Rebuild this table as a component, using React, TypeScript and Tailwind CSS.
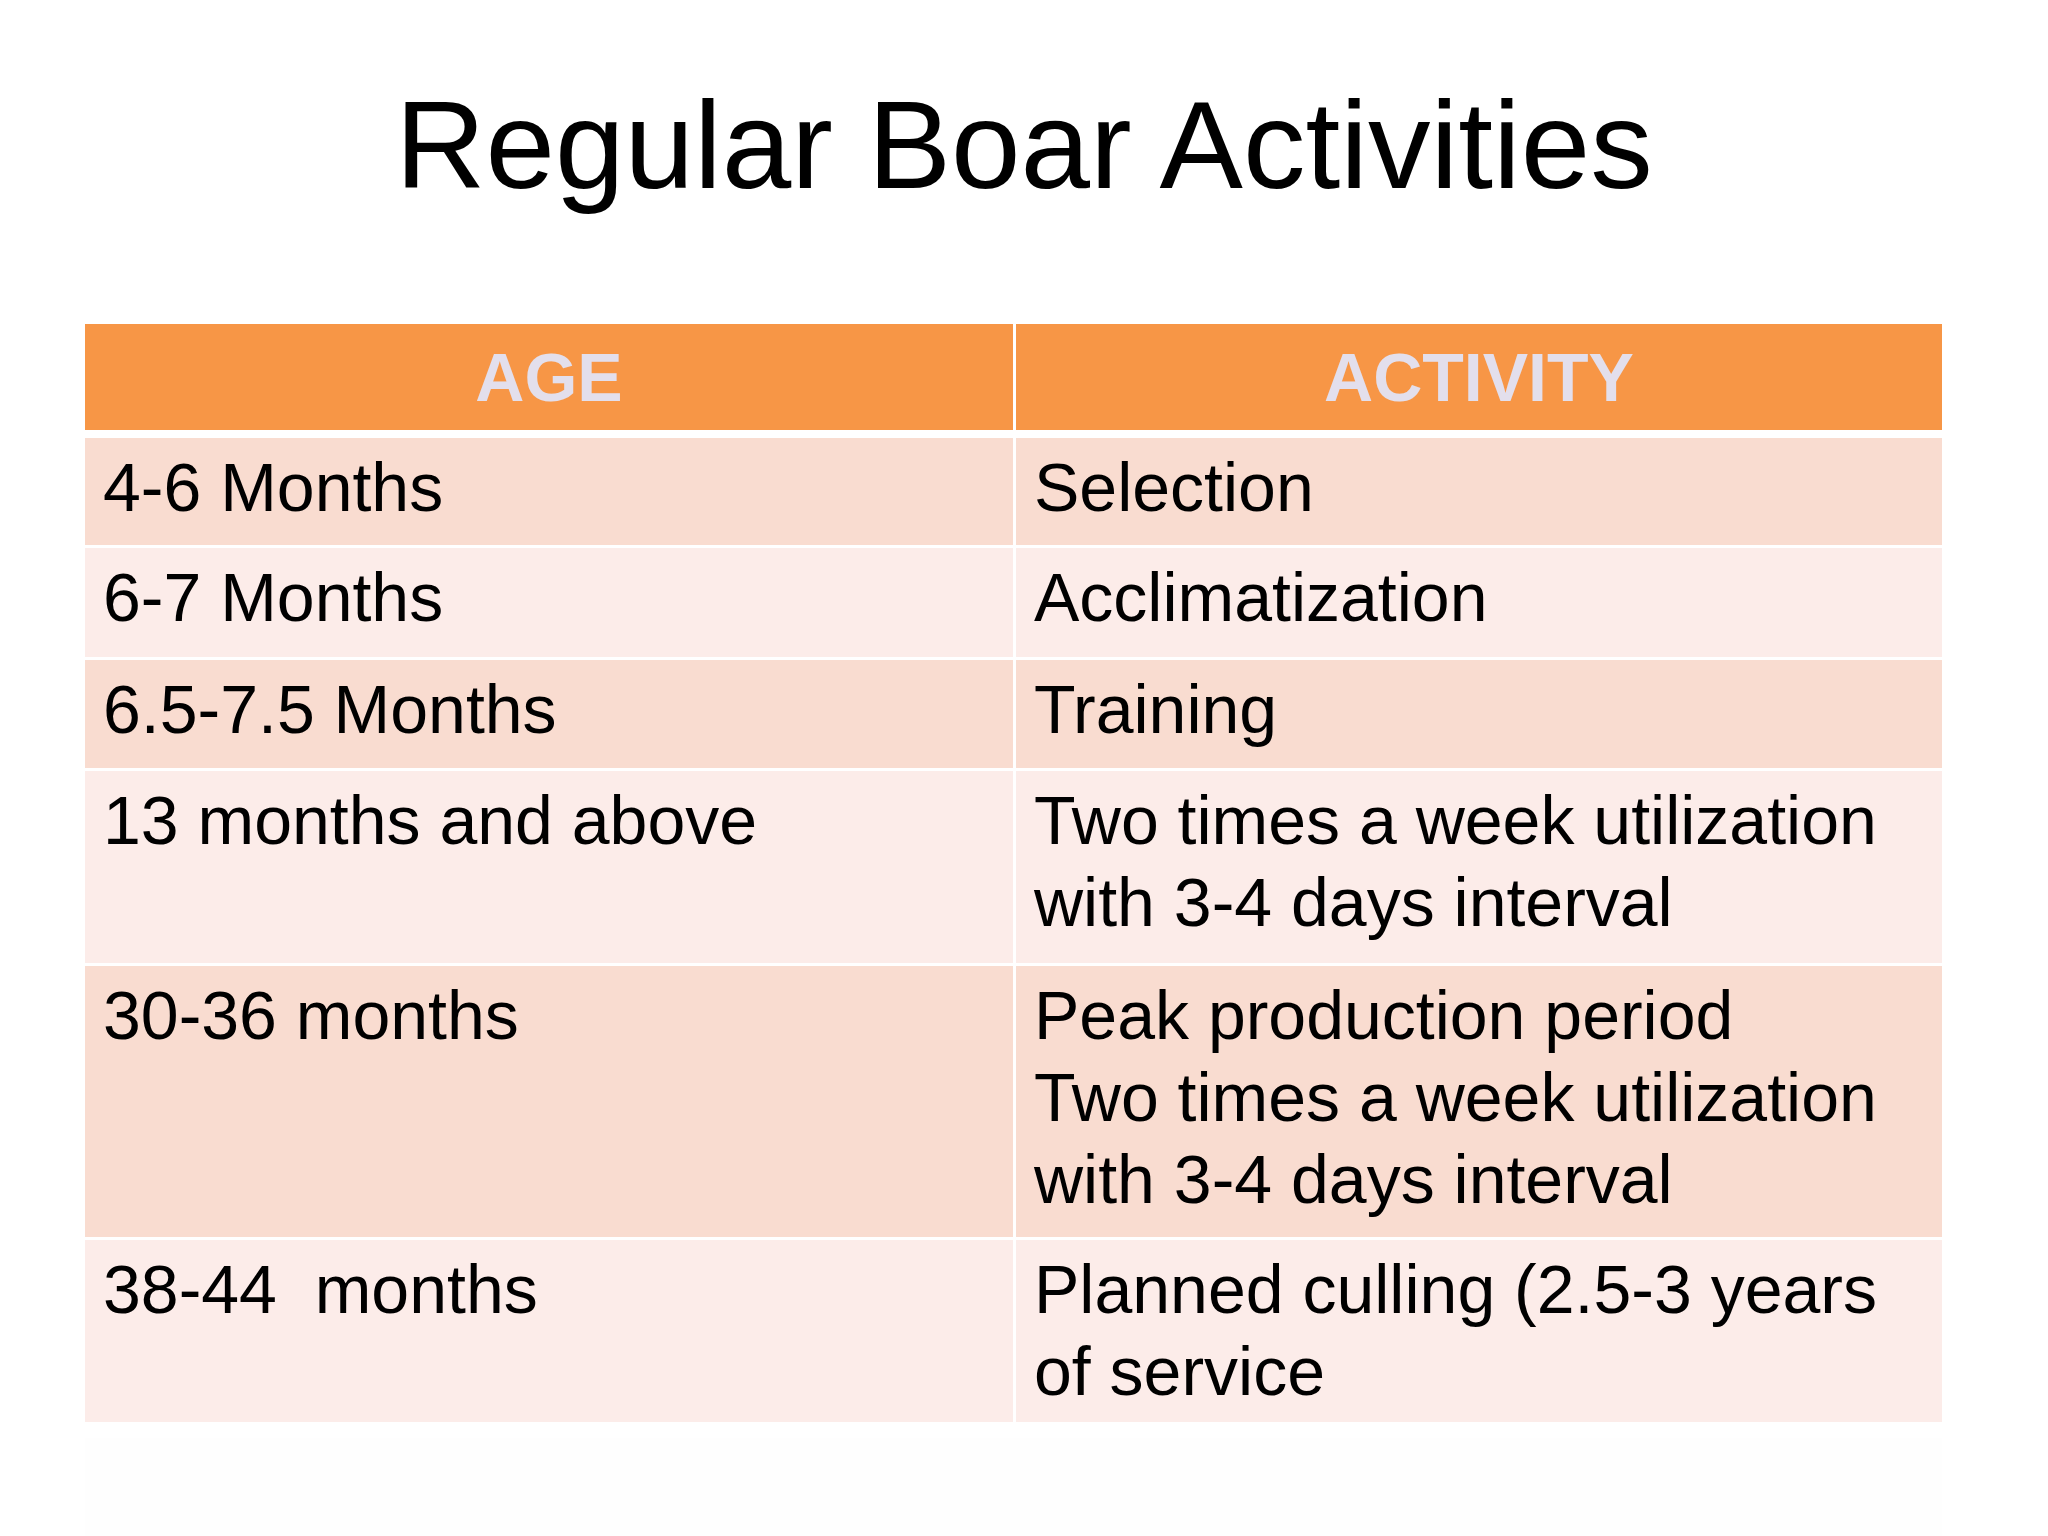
const rows = [
  { age: "4-6 Months", activity: ["Selection"], h: "h-[107px]", bg: "bg-[#f9dcd0]" },
  { age: "6-7 Months", activity: ["Acclimatization"], h: "h-[109px]", bg: "bg-[#fcece9]" },
  { age: "6.5-7.5 Months", activity: ["Training"], h: "h-[108px]", bg: "bg-[#f9dcd0]" },
  {
    age: "13 months and above",
    activity: ["Two times a week utilization", "with 3-4 days interval"],
    h: "h-[192px]",
    bg: "bg-[#fcece9]",
  },
  {
    age: "30-36 months",
    activity: [
      "Peak production period",
      "Two times a week utilization",
      "with 3-4 days interval",
    ],
    h: "h-[271px]",
    bg: "bg-[#f9dcd0]",
  },
  {
    age: "38-44\u00a0 months",
    activity: ["Planned culling (2.5-3 years", "of service"],
    h: "h-[182px]",
    bg: "bg-[#fcece9]",
  },
];

export default function App() {
  return (
    <div className="flex h-[1536px] w-[2048px] flex-col bg-white font-['Liberation_Sans',Arial,sans-serif] text-black">
      <h1 className="pt-[70px] text-center text-[125px] leading-[149px] font-normal">
        Regular Boar Activities
      </h1>

      <div className="mt-[105px] ml-[85px] flex w-[1857px] flex-col">
        <div className="grid h-[106px] grid-cols-[928px_926px] gap-x-[3px] bg-white">
          <div className="flex items-center justify-center bg-[#f79646] text-[68px] leading-[82px] font-bold text-[#e3dfec]">
            AGE
          </div>
          <div className="flex items-center justify-center bg-[#f79646] text-[68px] leading-[82px] font-bold text-[#e3dfec]">
            ACTIVITY
          </div>
        </div>

        <div className="mt-[8px] flex flex-col gap-y-[3px]">
          {rows.map((row) => (
            <div
              key={row.age}
              className={`grid ${row.h} grid-cols-[928px_926px] gap-x-[3px]`}
            >
              <div className={`${row.bg} px-[18px] pt-[8px] text-[68px] leading-[82px] whitespace-pre`}>
                {row.age}
              </div>
              <div className={`${row.bg} px-[18px] pt-[8px] text-[68px] leading-[82px]`}>
                {row.activity.map((line) => (
                  <div key={line} className="whitespace-nowrap">
                    {line}
                  </div>
                ))}
              </div>
            </div>
          ))}
        </div>

        <div className="mt-[16px] h-[98px] bg-[#fefefe]" />
      </div>
    </div>
  );
}
